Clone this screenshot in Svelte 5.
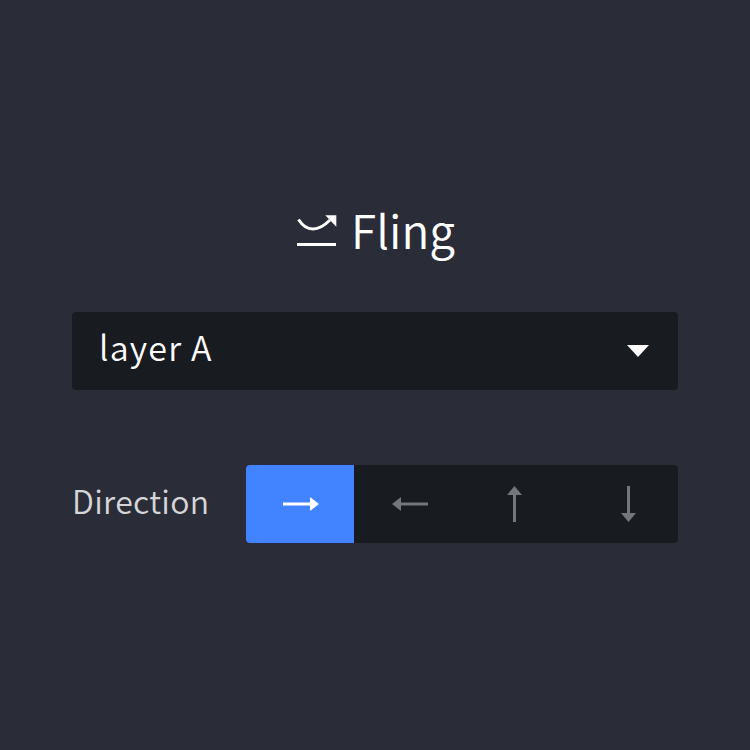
<script>
  let layer = 'layer A';
  let active = 0;
  const directions = [
    { name: 'right', line: 'M3 20H31', head: '30 13 39 20 30 27' },
    { name: 'left', line: 'M12 20H40', head: '13 13 4 20 13 27' },
    { name: 'up', line: 'M18.5 11V38', head: '11 11 18.5 2 26 11' },
    { name: 'down', line: 'M24.5 2V29', head: '17 29 24.5 38 32 29' }
  ];
</script>

<div class="panel">
  <h1 class="title">
    <svg class="fling_icon" width="40" height="34" viewBox="0 0 40 34" fill="none" aria-hidden="true">
      <path d="M1.5 4.5C6 11.5 11 14 16 14S26 12 33 5" stroke="#fff" stroke-width="3" />
      <polygon points="28.3 0.3 39.3 0.3 39.3 11.7" fill="#fff" />
      <rect y="28" width="39" height="3" fill="#fff" />
    </svg>
    <span class="name">Fling</span>
  </h1>

  <div class="select">
    <span class="value">{layer}</span>
    <svg width="22" height="12" viewBox="0 0 22 12" aria-hidden="true">
      <polygon points="0 0 22 0 11 12" fill="#fff" />
    </svg>
  </div>

  <div class="direction">
    <span class="label">Direction</span>
    <div class="segments">
      {#each directions as d, i}
        <button type="button" class:on={i == active} aria-label={d.name} on:click={() => (active = i)}>
          <svg width="40" height="40" viewBox="0 0 40 40" aria-hidden="true">
            <path d={d.line} stroke="currentColor" stroke-width="3" fill="none" />
            <polygon points={d.head} fill="currentColor" />
          </svg>
        </button>
      {/each}
    </div>
  </div>
</div>

<style>
  :global(body) {
    background: #2a2c37;
  }
  .panel {
    width: 750px;
    height: 750px;
    box-sizing: border-box;
    padding: 196px 72px 0;
    background: #2a2c37;
    font-family: "Noto Sans CJK KR", "Noto Sans", sans-serif;
    font-weight: 350;
    color: #fff;
  }
  .title {
    display: flex;
    align-items: center;
    justify-content: center;
    gap: 14px;
    height: 72px;
    margin: 0 0 44px;
    padding-left: 2px;
    font-size: 46px;
    font-weight: 350;
  }
  .name {
    padding-bottom: 6px;
  }
  .select {
    display: flex;
    align-items: center;
    justify-content: space-between;
    height: 78px;
    padding: 0 29px 0 27px;
    background: #181b1f;
    border-radius: 4px;
    font-size: 34px;
    letter-spacing: 1.2px;
  }
  .value {
    padding-bottom: 9px;
  }
  .direction {
    display: flex;
    align-items: center;
    justify-content: space-between;
    margin-top: 75px;
  }
  .label {
    padding-bottom: 9px;
    font-size: 32px;
    letter-spacing: 0.3px;
    color: #d5d6d8;
  }
  .segments {
    display: flex;
    width: 432px;
    height: 78px;
    background: #181b1f;
    border-radius: 4px;
    overflow: hidden;
  }
  button {
    display: flex;
    align-items: center;
    justify-content: center;
    flex: 1;
    padding: 0;
    border: none;
    background: none;
    color: #747679;
  }
  button.on {
    background: #4284ff;
    color: #fff;
  }
</style>
